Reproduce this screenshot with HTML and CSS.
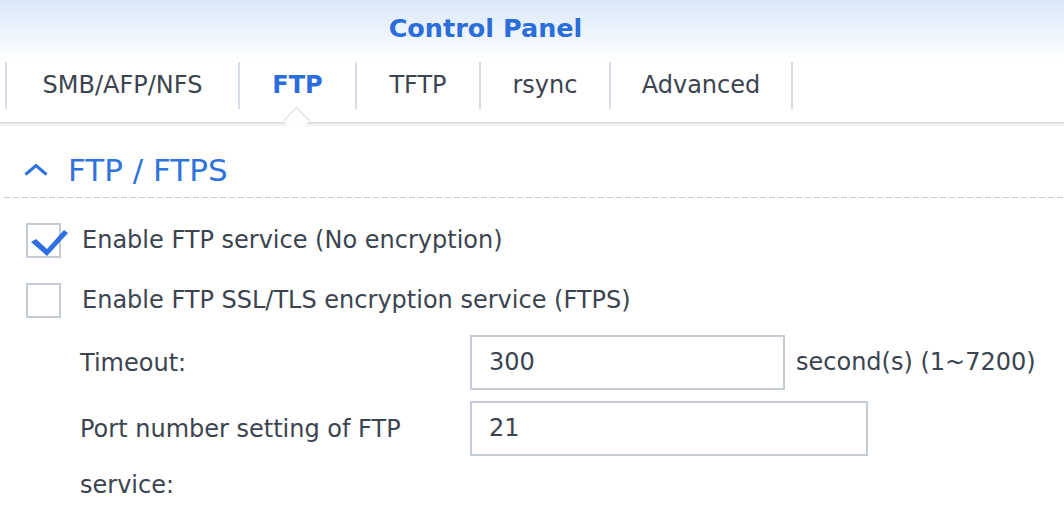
FILE: index.html
```html
<!DOCTYPE html>
<html>
<head>
<meta charset="utf-8">
<link rel="stylesheet" href="styles.css">
</head>
<body>
<header class="titlebar">
  <div class="title">Control Panel</div>
</header>
<nav class="tabbar">
  <div class="tab t-smb">SMB/AFP/NFS</div>
  <div class="tab t-ftp active">FTP</div>
  <div class="tab t-tftp">TFTP</div>
  <div class="tab t-rsync">rsync</div>
  <div class="tab t-adv">Advanced</div>
  <span class="notch"></span>
</nav>
<main class="content">
  <div class="section-head">
    <svg class="chev" width="24" height="12" viewBox="0 0 24 12"><polyline points="1.5,10.5 12,1.5 22.5,10.5" fill="none" stroke="#2f74dc" stroke-width="3"/></svg>
    <span class="section-title">FTP / FTPS</span>
  </div>
  <div class="dash"></div>
  <div class="check-row">
    <span class="box">
      <svg class="tick" width="38" height="28" viewBox="0 0 38 28"><polygon points="1,13 6,10 17,20 34,1 38,4 17,27" fill="#2f6fe2"/></svg>
    </span>
    <span class="label">Enable FTP service (No encryption)</span>
  </div>
  <div class="check-row">
    <span class="box"></span>
    <span class="label">Enable FTP SSL/TLS encryption service (FTPS)</span>
  </div>
  <div class="form">
    <div class="f-label">Timeout:</div>
    <div class="f-field"><div class="input w1">300</div><span class="unit">second(s) (1~7200)</span></div>
    <div class="f-label">Port number setting of FTP service:</div>
    <div class="f-field"><div class="input w2">21</div></div>
  </div>
</main>
</body>
</html>
```

FILE: styles.css
```css
* { box-sizing: border-box; }
html, body { margin: 0; padding: 0; background: #fff; }
body {
  width: 1064px;
  height: 514px;
  overflow: hidden;
  font-family: "DejaVu Sans", Verdana, sans-serif;
  color: #3b444f;
  font-size: 24px;
}
.titlebar {
  height: 62px;
  background: linear-gradient(to bottom, #d9e8f9 0%, #eef5fd 55%, #ffffff 100%);
  padding-right: 93px;
  text-align: center;
}
.title {
  font-weight: bold;
  font-size: 25.5px;
  line-height: 26px;
  padding-top: 15px;
  color: #2a6ddb;
}
.tabbar {
  position: relative;
  display: flex;
  align-items: flex-start;
  height: 61px;
  padding-left: 5px;
  border-bottom: 1px solid #d4d8de;
  box-shadow: 0 2px 3px rgba(0, 0, 0, 0.10);
  background: #fff;
}
.tab {
  height: 47px;
  line-height: 47px;
  text-align: center;
  border-right: 2px solid #d6dde6;
  white-space: nowrap;
}
.t-smb { border-left: 2px solid #d6dde6; width: 235px; }
.t-ftp { width: 117px; }
.t-tftp { width: 124px; }
.t-rsync { width: 130px; }
.t-adv { width: 182px; }
.tab.active { color: #2a6ddb; font-weight: bold; }
.notch {
  position: absolute;
  left: 287px;
  bottom: -8px;
  width: 19px;
  height: 19px;
  background: #fff;
  border-left: 1px solid #d4d8de;
  border-top: 1px solid #d4d8de;
  transform: rotate(45deg);
}
.content { padding-top: 27px; }
.section-head {
  display: flex;
  align-items: center;
  height: 40px;
  padding-left: 24px;
  margin-bottom: 7px;
  color: #2f74dc;
}
.chev { margin-right: 20px; margin-top: -1px; }
.section-title { font-size: 31px; line-height: 40px; }
.dash {
  height: 1px;
  margin-left: 4px;
  background: repeating-linear-gradient(to right, #c9cdd3 0, #c9cdd3 6px, transparent 6px, transparent 9px);
  margin-bottom: 12px;
}
.check-row {
  display: flex;
  align-items: center;
  height: 60px;
  padding-left: 26px;
}
.box {
  position: relative;
  width: 35px;
  height: 35px;
  border: 2px solid #c5ccd6;
  background: #fff;
  margin-right: 21px;
  flex: none;
}
.tick { position: absolute; left: 2px; top: 4px; }
.form {
  display: grid;
  grid-template-columns: 390px auto;
  row-gap: 10px;
  padding-left: 80px;
  margin-top: 5px;
}
.f-label { line-height: 56px; padding-right: 40px; }
.f-field { display: flex; align-items: flex-start; }
.input {
  height: 55px;
  line-height: 51px;
  border: 2px solid #c5ccd6;
  padding-left: 17px;
  background: #fff;
}
.w1 { width: 315px; }
.w2 { width: 398px; }
.unit { margin-left: 11px; line-height: 55px; }
```
